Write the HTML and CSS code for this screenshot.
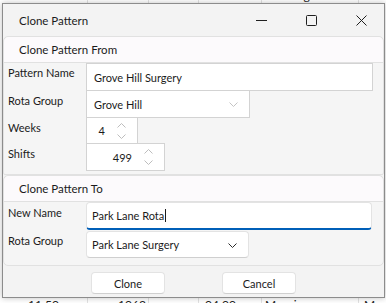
FILE: index.html
```html
<!DOCTYPE html>
<html>
<head>
<meta charset="utf-8">
<title>Clone Pattern</title>
<link rel="stylesheet" href="styles.css">
</head>
<body>
<div class="backdrop">
  <div class="trow trow-top"><span>00:00</span><span>1750</span><span></span><span>04:00</span><span>Morning</span><span>M</span></div>
  <div class="trow trow-bottom"><span>11:50</span><span>1063</span><span></span><span>04:00</span><span>Morning</span><span>M</span></div>
</div>

<div class="window">
  <div class="titlebar">
    <div class="title">Clone Pattern</div>
    <div class="cap cap-min"><svg width="11" height="11" viewBox="0 0 11 11"><line x1="0" y1="5.5" x2="11" y2="5.5" stroke="#1f1f1f" stroke-width="1"/></svg></div>
    <div class="cap cap-max"><svg width="11" height="11" viewBox="0 0 11 11"><rect x="0.5" y="0.5" width="10" height="10" rx="1" fill="none" stroke="#1f1f1f" stroke-width="1"/></svg></div>
    <div class="cap cap-close"><svg width="11" height="11" viewBox="0 0 11 11"><path d="M0.5 0.5 L10.5 10.5 M10.5 0.5 L0.5 10.5" stroke="#1f1f1f" stroke-width="1"/></svg></div>
  </div>

  <div class="group group-from">
    <div class="ghead">Clone Pattern From</div>
    <div class="form form-from">
      <div class="label">Pattern Name</div>
      <div class="field"><div class="box flat w-name">Grove Hill Surgery</div></div>

      <div class="label">Rota Group</div>
      <div class="field"><div class="box flat combo w-combo"><span class="val">Grove Hill</span><svg class="chev" width="9" height="5" viewBox="0 0 9 5"><polyline points="0.5,0.5 4.5,4.5 8.5,0.5" fill="none" stroke="#c4c4c4" stroke-width="1"/></svg></div></div>

      <div class="label">Weeks</div>
      <div class="field"><div class="box flat spin w-weeks short"><span class="num">4</span><span class="arrows"><svg width="9" height="5" viewBox="0 0 9 5"><polyline points="0.5,4.5 4.5,0.5 8.5,4.5" fill="none" stroke="#bdbdbd" stroke-width="1"/></svg><svg width="9" height="5" viewBox="0 0 9 5"><polyline points="0.5,0.5 4.5,4.5 8.5,0.5" fill="none" stroke="#bdbdbd" stroke-width="1"/></svg></span></div></div>

      <div class="label">Shifts</div>
      <div class="field"><div class="box flat spin w-shifts"><span class="num">499</span><span class="arrows"><svg width="9" height="5" viewBox="0 0 9 5"><polyline points="0.5,4.5 4.5,0.5 8.5,4.5" fill="none" stroke="#bdbdbd" stroke-width="1"/></svg><svg width="9" height="5" viewBox="0 0 9 5"><polyline points="0.5,0.5 4.5,4.5 8.5,0.5" fill="none" stroke="#bdbdbd" stroke-width="1"/></svg></span></div></div>
    </div>
  </div>

  <div class="group group-to">
    <div class="ghead">Clone Pattern To</div>
    <div class="form form-to">
      <div class="label">New Name</div>
      <div class="field"><div class="box modern focused w-newname">Park Lane Rota<span class="caret"></span></div></div>

      <div class="label">Rota Group</div>
      <div class="field"><div class="box modern combo w-combo2"><span class="val">Park Lane Surgery</span><svg class="chev" width="9" height="5" viewBox="0 0 9 5"><polyline points="0.5,0.5 4.5,4.5 8.5,0.5" fill="none" stroke="#2b2b2b" stroke-width="1"/></svg></div></div>
    </div>
  </div>

  <div class="buttons">
    <div class="btn">Clone</div>
    <div class="btn">Cancel</div>
  </div>
</div>
</body>
</html>
```

FILE: styles.css
```css
html, body {
  margin: 0;
  padding: 0;
}
body {
  width: 386px;
  height: 303px;
  overflow: hidden;
  position: relative;
  background: #ffffff;
  font-family: Lato, "Noto Sans", sans-serif;
  font-size: 11px;
  color: #1b1b1b;
}

/* background table behind the dialog */
.backdrop {
  height: 303px;
  display: flex;
  flex-direction: column;
  justify-content: space-between;
  background:
    linear-gradient(#e2e2e2, #e2e2e2) 87px 0 / 1px 100% no-repeat,
    linear-gradient(#e2e2e2, #e2e2e2) 148px 0 / 1px 100% no-repeat,
    linear-gradient(#e2e2e2, #e2e2e2) 198px 0 / 1px 100% no-repeat,
    linear-gradient(#e2e2e2, #e2e2e2) 261px 0 / 1px 100% no-repeat,
    linear-gradient(#e2e2e2, #e2e2e2) 358px 0 / 1px 100% no-repeat,
    #ffffff;
}
.trow {
  display: grid;
  grid-template-columns: 87px 61px 50px 63px 97px 28px;
  height: 16px;
  line-height: 16px;
  font-size: 12px;
  color: #222;
  white-space: nowrap;
}
.trow span { padding-left: 28px; overflow: hidden; }
.trow span:nth-child(2) { padding-left: 31px; }
.trow span:nth-child(4) { padding-left: 7px; }
.trow span:nth-child(5) { padding-left: 4px; }
.trow span:nth-child(6) { padding-left: 6px; }
.trow-top { margin-top: -12px; }
.trow-bottom { margin-bottom: -10px; }

/* dialog window */
.window {
  position: absolute;
  left: 2px;
  top: 3px;
  width: 381px;
  height: 293px;
  border: 1px solid #8c8c8c;
  background: #f3f3f3;
  display: flex;
  flex-direction: column;
  box-shadow: 0 0 6px rgba(0,0,0,0.25);
}

.titlebar {
  height: 32px;
  display: flex;
  align-items: center;
  flex: none;
}
.title {
  flex: 1;
  padding-left: 16px;
  font-size: 11.5px;
  color: #1b1b1b;
}
.cap {
  height: 32px;
  display: flex;
  align-items: center;
  justify-content: center;
}
.cap svg { display: block; }
.cap-min { width: 46px; }
.cap-max { width: 54px; }
.cap-close { width: 46px; }

/* groups */
.group {
  flex: none;
  border: 1px solid #e1e1e1;
  border-radius: 5px;
  background: #f5f5f5;
}
.group-from {
  height: 137px;
  border-radius: 5px 5px 2px 2px;
}
.group-to {
  height: 89px;
}
.ghead {
  height: 25px;
  line-height: 25px;
  padding-left: 15px;
  background: #fcfafc;
  border-bottom: 1px solid #e1e1e1;
  border-radius: 5px 5px 0 0;
  font-size: 11.5px;
}

.form {
  display: grid;
  grid-template-columns: 82px 1fr;
}
.label {
  padding-left: 4px;
  padding-top: 2px;
  line-height: 16px;
  white-space: nowrap;
}
.field { display: flex; }

.box {
  box-sizing: border-box;
  background: #ffffff;
  display: flex;
  align-items: center;
  white-space: nowrap;
}
.flat {
  height: 28px;
  border: 1px solid #d3d3d3;
  padding-left: 7px;
}
.form-from .field + .label + .field .box { margin-top: -1px; }
.short { height: 27px; }
.w-name { width: 287px; }
.w-combo { width: 164px; }
.w-weeks { width: 52px; }
.w-shifts { width: 79px; }

.combo .val { flex: 1; }
.combo .chev { margin-right: 11px; margin-top: 1px; }

.spin { padding-left: 0; }
.spin .num { flex: 1; text-align: right; padding-right: 12px; }
.spin .arrows {
  width: 9px;
  margin-right: 11px;
  display: flex;
  flex-direction: column;
  gap: 6px;
}
.spin .arrows svg { display: block; }

.form-to .label { padding-top: 3px; }
.modern {
  border: 1px solid #e3e3e3;
  border-bottom-color: #cfcfcf;
  border-radius: 4px;
  padding-left: 5px;
}
.focused {
  height: 28px;
  border-bottom: 2px solid #005fb8;
}
.w-newname { width: 286px; }
.w-combo2 { width: 163px; height: 27px; margin-top: 1px; }
.caret {
  display: inline-block;
  width: 1px;
  height: 13px;
  background: #1b1b1b;
  margin-left: 1px;
}

.buttons {
  flex: none;
  margin-top: 6px;
  display: flex;
  justify-content: center;
  gap: 57px;
}
.btn {
  box-sizing: border-box;
  width: 74px;
  height: 22px;
  background: #ffffff;
  border: 1px solid #e3e3e3;
  border-bottom-color: #d0d0d0;
  border-radius: 4px;
  display: flex;
  align-items: center;
  justify-content: center;
}
```
